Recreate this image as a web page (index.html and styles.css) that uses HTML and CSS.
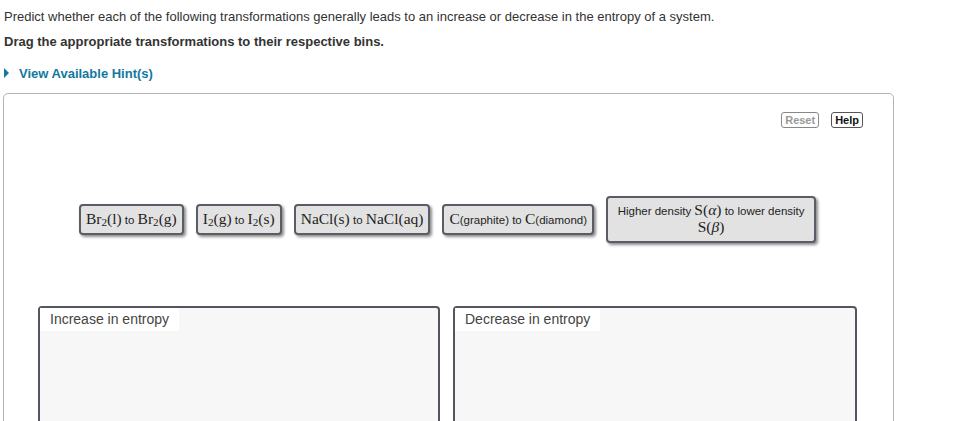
FILE: index.html
```html
<!DOCTYPE html>
<html lang="en">
<head>
    <meta charset="UTF-8">
    <meta name="viewport" content="width=device-width, initial-scale=1.0">
    <title>Entropy sorting</title>
    <link rel="stylesheet" href="styles.css">
</head>
<body>
    <div class="question">
        <p class="prompt">Predict whether each of the following transformations generally leads to an increase or decrease in the entropy of a system.</p>
        <p class="instruction">Drag the appropriate transformations to their respective bins.</p>
        <a class="hint-link" href="#"><span class="hint-arrow"></span>View Available Hint(s)</a>

        <div class="sort-panel">
            <div class="toolbar">
                <button class="tool-btn disabled">Reset</button>
                <button class="tool-btn">Help</button>
            </div>

            <div class="items-row">
                <div class="drag-item"><span class="m">Br<sub>2</sub>(l)</span> to <span class="m">Br<sub>2</sub>(g)</span></div>
                <div class="drag-item"><span class="m">I<sub>2</sub>(g)</span> to <span class="m">I<sub>2</sub>(s)</span></div>
                <div class="drag-item"><span class="m">NaCl(s)</span> to <span class="m">NaCl(aq)</span></div>
                <div class="drag-item"><span class="m">C</span>(graphite) to <span class="m">C</span>(diamond)</div>
                <div class="drag-item wide">Higher density <span class="m">S(<i>α</i>)</span> to lower density <span class="m">S(<i>β</i>)</span></div>
            </div>

            <div class="bins">
                <div class="bin">
                    <div class="bin-label">Increase in entropy</div>
                </div>
                <div class="bin">
                    <div class="bin-label">Decrease in entropy</div>
                </div>
            </div>
        </div>
    </div>
</body>
</html>
```

FILE: styles.css
```css
body {
    margin: 0;
    padding: 0 0 0 3px;
    font-family: 'Liberation Sans', Arial, sans-serif;
    color: #333;
    background: #fff;
}

.question {
    width: 891px;
}

.prompt,
.instruction {
    margin: 0 0 7px 1px;
    font-size: 13px;
    line-height: 18px;
}

.prompt {
    padding-top: 8px;
}

.instruction {
    font-weight: bold;
    margin-bottom: 13px;
}

.hint-link {
    display: flex;
    align-items: center;
    margin-left: 1px;
    height: 18px;
    font-size: 13px;
    font-weight: bold;
    color: #11799f;
    text-decoration: none;
}

.hint-arrow {
    width: 0;
    height: 0;
    border-top: 5px solid transparent;
    border-bottom: 5px solid transparent;
    border-left: 5px solid #11799f;
    margin-right: 10px;
}

/* drag & drop panel */
.sort-panel {
    margin-top: 11px;
    border: 1px solid #b3b3b3;
    border-radius: 5px;
    height: 400px;
}

.toolbar {
    display: flex;
    justify-content: flex-end;
    gap: 12px;
    padding: 18px 30px 0 0;
}

.tool-btn {
    font-family: 'Liberation Sans', Arial, sans-serif;
    font-size: 11px;
    font-weight: bold;
    line-height: 14px;
    padding: 0 3px;
    background: #fff;
    color: #111;
    border: 1px solid #555;
    border-radius: 3px;
}

.tool-btn.disabled {
    color: #999;
    border-color: #888;
}

.items-row {
    display: flex;
    justify-content: center;
    align-items: center;
    gap: 12px;
    height: 44px;
    margin-top: 69px;
    margin-left: -2px;
}

.drag-item {
    padding: 4px 5px;
    font-size: 11.5px;
    line-height: 17px;
    color: #222;
    background: #e2e2e2;
    border: 2px solid #5c5c66;
    border-radius: 4px;
    box-shadow: 2px 2px 3px rgba(0, 0, 0, 0.45);
    white-space: nowrap;
}

.drag-item .m {
    font-family: 'Liberation Serif', 'Times New Roman', serif;
    font-size: 15.5px;
}

.drag-item sub {
    font-size: 72%;
    line-height: 0;
    vertical-align: -0.2em;
}

.drag-item.wide {
    white-space: normal;
    width: 200px;
    text-align: center;
    line-height: 15px;
    padding: 4px 3px 5px;
}

.bins {
    display: grid;
    grid-template-columns: 402px 404px;
    gap: 13px;
    padding: 0 0 0 34px;
    margin-top: 65px;
}

.bin {
    height: 200px;
    background: #f7f7f7;
    border: 2px solid #55555f;
    border-radius: 4px;
    box-sizing: border-box;
}

.bin-label {
    display: inline-block;
    background: #fff;
    padding: 3px 10px 3px 10px;
    font-size: 14px;
    line-height: 17px;
    color: #444;
}
```
